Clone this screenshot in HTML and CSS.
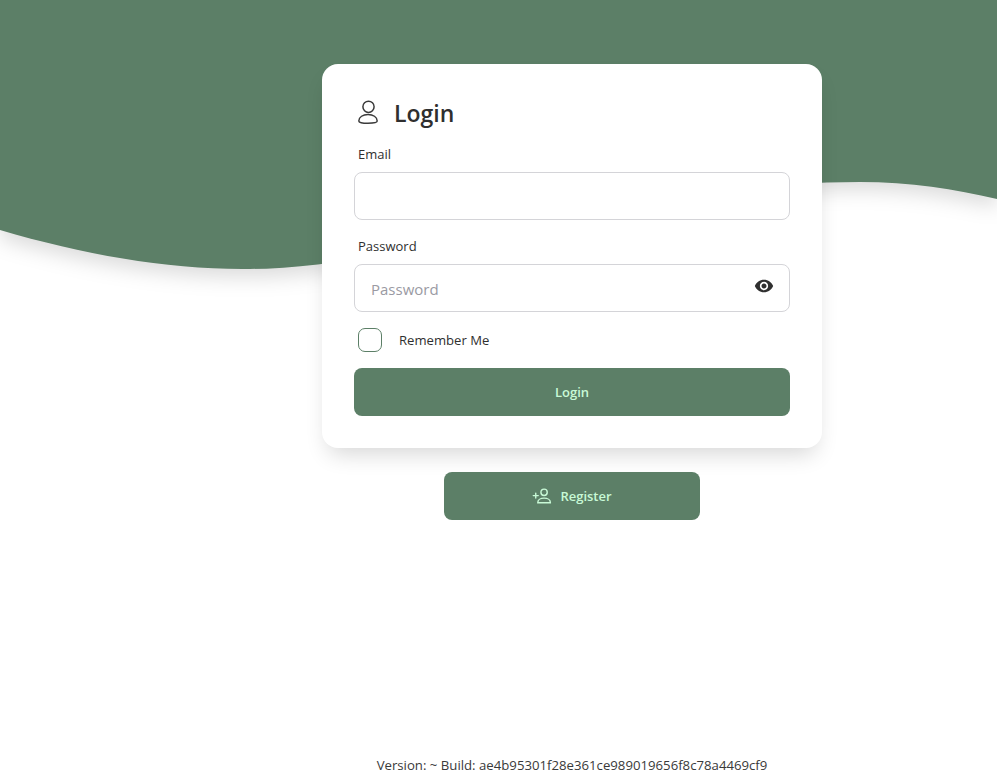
FILE: index.html
```html
<!DOCTYPE html>
<html lang="en">
<head>
    <meta charset="UTF-8">
    <meta name="viewport" content="width=device-width, initial-scale=1.0">
    <title>Login</title>
    <link rel="stylesheet" href="styles.css">
</head>
<body>
    <svg class="wave" viewBox="0 0 997 783" width="997" height="783" aria-hidden="true">
        <path d="M0 0H997V199C955 189 910 182 860 182C620 182 420 267 250 269C170 270 85 255 0 230Z"/>
    </svg>

    <main class="page">
        <form class="card">
            <h1 class="card-title">
                <svg class="title-icon" viewBox="0 0 24 24" width="24" height="24" fill="none" stroke="currentColor" stroke-width="1.5">
                    <circle cx="12.500" cy="6.800" r="5.600"/>
                    <path d="M2.800 21C2.800 17 7 14.500 12 14.500S21.200 17 21.200 21C21.200 22.500 18 23.200 12 23.200S2.800 22.500 2.800 21Z"/>
                </svg>
                Login
            </h1>

            <label class="field-label" for="email">Email</label>
            <input class="text-input" type="text" id="email">

            <label class="field-label password-label" for="password">Password</label>
            <div class="password-wrap">
                <input class="text-input" type="password" id="password" placeholder="Password">
                <svg class="eye" viewBox="0 0 24 24" width="20" height="20" fill="currentColor">
                    <path d="M12 4.500C7 4.500 2.730 7.610 1 12c1.730 4.390 6 7.500 11 7.500s9.270-3.110 11-7.500c-1.730-4.390-6-7.500-11-7.500zM12 17c-2.760 0-5-2.240-5-5s2.240-5 5-5 5 2.240 5 5-2.240 5-5 5zm0-8c-1.660 0-3 1.340-3 3s1.340 3 3 3 3-1.340 3-3-1.340-3-3-3z"/>
                </svg>
            </div>

            <label class="remember">
                <span class="checkbox"></span>
                Remember Me
            </label>

            <button class="btn" type="button">Login</button>
        </form>

        <button class="btn btn-register" type="button">
            <svg viewBox="0 0 24 24" width="20" height="20" fill="none" stroke="currentColor" stroke-width="1.700" stroke-linecap="round">
                <circle cx="14.500" cy="7.500" r="3.800"/>
                <path d="M7 20v-.500c0-3 3.500-5 7.500-5s7.500 2 7.500 5v.500z"/>
                <path d="M1.500 11.500h6M4.500 8.500v6"/>
            </svg>
            Register
        </button>

        <footer class="version">Version: ~ Build: ae4b95301f28e361ce989019656f8c78a4469cf9</footer>
    </main>
</body>
</html>
```

FILE: styles.css
```css
* {
    box-sizing: border-box;
}
html, body {
    margin: 0;
    padding: 0;
    height: 100%;
    overflow: hidden;
}
body {
    position: relative;
    background: #fff;
    color: #2f2f2f;
    font-family: "Open Sans", "Noto Sans", sans-serif;
}
.wave {
    position: absolute;
    top: 0;
    left: 0;
    fill: #5c7f67;
    filter: drop-shadow(0 8px 10px rgba(0, 0, 0, 0.14));
}
.page {
    position: relative;
    display: flex;
    flex-direction: column;
    align-items: center;
    min-height: 783px;
    padding: 64px 0 9px 147px;
}
.card {
    display: flex;
    flex-direction: column;
    width: 500px;
    height: 384px;
    padding: 32px;
    background: #fff;
    border-radius: 16px;
    box-shadow: 0 12px 22px -6px rgba(0, 0, 0, 0.16);
}
.card-title {
    display: flex;
    align-items: center;
    gap: 14px;
    height: 36px;
    margin: 0 0 8px;
    padding: 0 0 2px 2px;
    font-size: 23px;
    font-weight: 600;
    color: #2f2f2f;
}
.title-icon {
    color: #3a3a3a;
    margin-bottom: 2px;
}
.field-label {
    display: block;
    height: 32px;
    padding: 4px 0 0 4px;
    font-size: 13px;
    line-height: 20px;
}
.password-label {
    margin-top: 12px;
}
.text-input {
    display: block;
    width: 100%;
    height: 48px;
    padding: 2px 16px 0;
    border: 1px solid #d4d4d8;
    border-radius: 8px;
    background: #fff;
    font: inherit;
    font-size: 15px;
    outline: none;
}
.text-input::placeholder {
    color: #9a9aa3;
}
.password-wrap {
    position: relative;
}
.eye {
    position: absolute;
    top: 12px;
    right: 16px;
    color: #2f2f2f;
}
.remember {
    display: flex;
    align-items: center;
    gap: 17px;
    height: 24px;
    margin: 16px 0;
    padding-left: 4px;
    font-size: 13.100px;
}
.checkbox {
    width: 24px;
    height: 24px;
    border: 1px solid #5c7f67;
    border-radius: 7px;
}
.btn {
    display: flex;
    align-items: center;
    justify-content: center;
    gap: 8px;
    width: 100%;
    height: 48px;
    border: none;
    border-radius: 8px;
    background: #5c7f67;
    color: #c8f9d6;
    font-family: inherit;
    font-size: 13px;
    font-weight: 600;
}
.btn-register {
    width: 256px;
    margin-top: 24px;
}
.version {
    margin-top: auto;
    font-size: 13.200px;
    line-height: 18px;
    color: #3a3a3a;
}
```
